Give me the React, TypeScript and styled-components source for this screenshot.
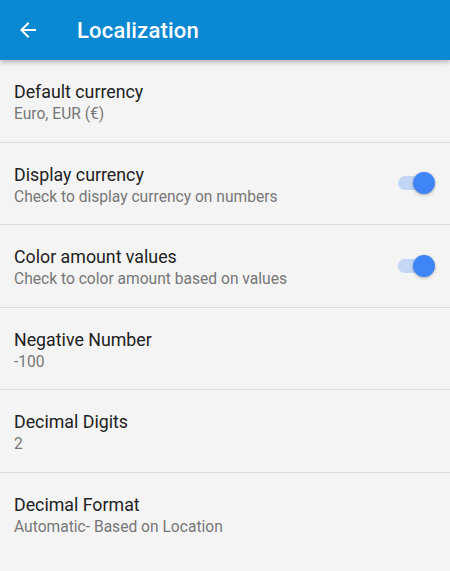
import styled, { createGlobalStyle } from 'styled-components'

const GlobalStyle = createGlobalStyle`
  html, body {
    margin: 0;
    padding: 0;
    background: #f4f4f4;
    font-family: Roboto, 'Noto Sans', sans-serif;
  }
`

const Page = styled.div`
  width: 450px;
  min-height: 571px;
  background: #f4f4f4;
`

const Toolbar = styled.header`
  height: 60px;
  display: flex;
  align-items: center;
  background: #0b88d2;
  box-shadow: 0 2px 5px rgba(0, 0, 0, 0.28);
  position: relative;
  z-index: 1;
`

const BackButton = styled.div`
  width: 77px;
  padding-left: 16px;
  box-sizing: border-box;
  display: flex;
  align-items: center;
`

const Title = styled.h1`
  margin: 0;
  color: #fff;
  font-size: 22px;
  font-weight: 500;
  letter-spacing: 0.2px;
`

const List = styled.div`
  display: flex;
  flex-direction: column;
`

const Row = styled.div<{ $last?: boolean }>`
  height: 81.5px;
  padding: 0 14px;
  display: flex;
  align-items: center;
  justify-content: space-between;
  border-bottom: ${({ $last }) => ($last ? 'none' : '1px solid #d9d9d9')};
`

const Texts = styled.div`
  display: flex;
  flex-direction: column;
  gap: 1px;
  padding-top: 4px;
`

const RowTitle = styled.div`
  font-size: 17.8px;
  line-height: 22px;
  color: #222;
`

const RowSub = styled.div`
  font-size: 15.6px;
  line-height: 20px;
  color: #777;
`

const Switch = styled.div<{ $on: boolean }>`
  position: relative;
  width: 36px;
  height: 14px;
  border-radius: 7px;
  background: ${({ $on }) => ($on ? '#c4d6f6' : '#c8c8c8')};
  margin-right: 2px;
`

const Thumb = styled.div<{ $on: boolean }>`
  position: absolute;
  top: -4px;
  left: ${({ $on }) => ($on ? '15px' : '-3px')};
  width: 22px;
  height: 22px;
  border-radius: 50%;
  background: ${({ $on }) => ($on ? '#3f85f5' : '#fafafa')};
  box-shadow: 0 1px 3px rgba(0, 0, 0, 0.3);
`

const items = [
  { title: 'Default currency', sub: 'Euro, EUR (€)' },
  { title: 'Display currency', sub: 'Check to display currency on numbers', toggle: true },
  { title: 'Color amount values', sub: 'Check to color amount based on values', toggle: true },
  { title: 'Negative Number', sub: '-100' },
  { title: 'Decimal Digits', sub: '2' },
  { title: 'Decimal Format', sub: 'Automatic- Based on Location' },
]

const App = () => {
  return (
    <Page>
      <GlobalStyle />
      <Toolbar>
        <BackButton>
          <svg width="24" height="24" viewBox="0 0 24 24" fill="#fff">
            <path d="M20 11H7.83l5.59-5.59L12 4l-8 8 8 8 1.41-1.41L7.83 13H20v-2z" />
          </svg>
        </BackButton>
        <Title>Localization</Title>
      </Toolbar>
      <List>
        {items.map((item, i) => (
          <Row key={item.title} $last={i === items.length - 1}>
            <Texts>
              <RowTitle>{item.title}</RowTitle>
              <RowSub>{item.sub}</RowSub>
            </Texts>
            {item.toggle && (
              <Switch $on>
                <Thumb $on />
              </Switch>
            )}
          </Row>
        ))}
      </List>
    </Page>
  )
}

export default App
